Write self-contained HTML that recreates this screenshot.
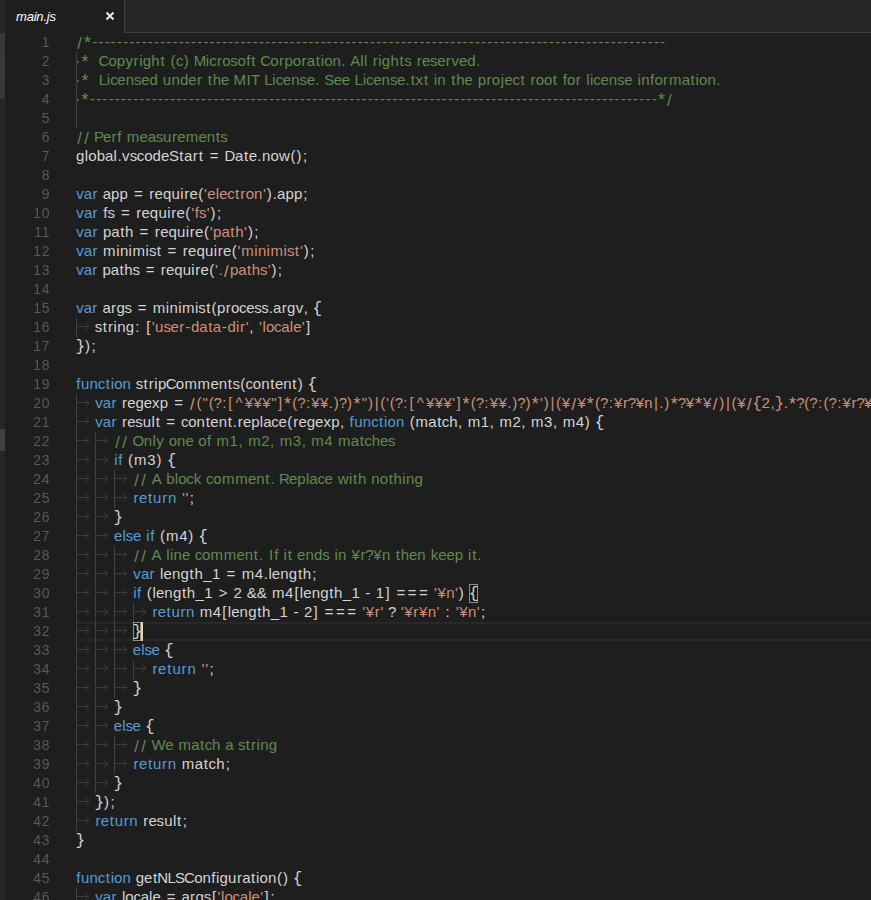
<!DOCTYPE html>
<html><head><meta charset="utf-8"><style>
html,body{margin:0;padding:0;}
body{width:871px;height:900px;overflow:hidden;background:#1e1e1e;position:relative;font-family:"Liberation Sans",sans-serif;}
.tabrest{position:absolute;left:124px;top:0;right:0;height:32px;background:#252525;border-left:1px solid #3f3f3f;border-bottom:1px solid #3f3f3f;}
.tabname{position:absolute;left:16px;top:9px;font-size:13px;font-style:italic;color:#ffffff;letter-spacing:-0.2px;}
.close{position:absolute;left:105px;top:11px;width:10px;height:10px;}
.strip{position:absolute;left:0;top:0;width:5px;height:900px;background:#262626;}
.ln{position:absolute;left:0;width:50.2px;text-align:right;font-size:14px;color:#595959;line-height:19px;height:19px;letter-spacing:0.7px;}
.l{position:absolute;height:19px;line-height:19px;font-size:15px;white-space:pre;color:#d4d4d4;font-kerning:none;}
.l i{font-style:normal;display:inline-flex;justify-content:center;}
.l i.b{font-family:"Liberation Mono",monospace;font-size:16px;}
.l i.st{font-size:18px;position:relative;top:1.5px;}
.l i.sl{font-size:16.5px;position:relative;top:1.5px;}
.k{color:#569cd6}.s{color:#ce9178}.c{color:#608b4e}
.bm{position:absolute;width:7px;height:17px;border:1px solid #9a8a84;background:#0f1a16;}
.caret{position:absolute;left:141px;top:622px;width:2px;height:19px;background:#dcd9b0;}
.g{position:absolute;width:1px;background:#404040;}
.cur{position:absolute;left:76px;right:0;top:622px;height:15px;border-top:2px solid #282828;border-bottom:2px solid #282828;}
.dot{position:absolute;left:77px;width:2px;height:2px;background:#505050;}
.w0{width:4.797px}.w1{width:6.243px}.w2{width:8.681px}.w3{width:9.947px}.w4{width:3.545px}.w5{width:6.036px}.w6{width:6.170px}.w7{width:8.615px}.w8{width:4.964px}.w9{width:6.176px}.w10{width:4.744px}.w11{width:7.102px}.w12{width:8.681px}.w13{width:8.681px}.w14{width:8.681px}.w15{width:8.681px}.w16{width:6.143px}.w17{width:5.923px}.w18{width:11.173px}.w19{width:11.173px}.w20{width:7.122px}.w21{width:9.334px}.w22{width:9.528px}.w23{width:10.574px}.w24{width:5.743px}.w25{width:7.602px}.w26{width:11.486px}.w27{width:10.207px}.w28{width:10.760px}.w29{width:8.235px}.w30{width:9.481px}.w31{width:9.361px}.w32{width:8.395px}.w33{width:13.478px}.w34{width:6.210px}.w35{width:6.210px}.w36{width:11.173px}.w37{width:8.681px}.w38{width:8.188px}.w39{width:8.468px}.w40{width:7.109px}.w41{width:8.468px}.w42{width:8.122px}.w43{width:4.797px}.w44{width:8.468px}.w45{width:8.648px}.w46{width:3.738px}.w47{width:4.537px}.w48{width:7.895px}.w49{width:3.738px}.w50{width:13.245px}.w51{width:8.648px}.w52{width:8.202px}.w53{width:8.468px}.w54{width:8.468px}.w55{width:5.823px}.w56{width:7.109px}.w57{width:5.370px}.w58{width:8.648px}.w59{width:7.895px}.w60{width:11.080px}.w61{width:7.895px}.w62{width:7.895px}.w63{width:8.661px}.w64{width:6.210px}.w65{width:8.521px}.w66{width:8.795px}
</style></head><body>
<div class="strip"></div>
<div class="tabrest"></div>
<div class="tabname">main.js</div>
<svg class="close" viewBox="0 0 10 10"><path d="M1.5 1.5L8.5 8.5M8.5 1.5L1.5 8.5" stroke="#e8e8e8" stroke-width="2"/></svg>
<div class="strip" style="top:33px;height:22px;background:#343837"></div>
<div class="strip" style="top:55px;height:22px;background:#3b3b3b"></div>
<div class="strip" style="top:77px;height:22px;background:#343837"></div>
<div class="strip" style="top:429px;height:22px;background:#3f3f3f"></div>
<div class="cur"></div>
<div class="bm" style="left:469px;top:584px"></div>
<div class="bm" style="left:133px;top:622px;width:6px"></div>
<div class="caret"></div>

<div class="g" style="left:76px;top:52px;height:76px"></div>
<div class="g" style="left:76px;top:318px;height:19px"></div>
<div class="g" style="left:76px;top:394px;height:437px"></div>
<div class="g" style="left:95px;top:432px;height:361px"></div>
<div class="g" style="left:114px;top:470px;height:38px"></div>
<div class="g" style="left:114px;top:546px;height:152px"></div>
<div class="g" style="left:133px;top:603px;height:19px"></div>
<div class="g" style="left:133px;top:660px;height:19px"></div>
<div class="g" style="left:114px;top:736px;height:38px"></div>
<div class="g" style="left:76px;top:888px;height:19px"></div>
<svg style="position:absolute;left:0;top:0" width="871" height="900"><path stroke="#3c3c3c" stroke-width="1" fill="none" d="M76 326.5H89 M85 323.0L89 326.5L85 330.0 M76 402.5H89 M85 399.0L89 402.5L85 406.0 M76 421.5H89 M85 418.0L89 421.5L85 425.0 M76 440.5H89 M85 437.0L89 440.5L85 444.0 M95 440.5H108 M104 437.0L108 440.5L104 444.0 M76 459.5H89 M85 456.0L89 459.5L85 463.0 M95 459.5H108 M104 456.0L108 459.5L104 463.0 M76 478.5H89 M85 475.0L89 478.5L85 482.0 M95 478.5H108 M104 475.0L108 478.5L104 482.0 M114 478.5H127 M123 475.0L127 478.5L123 482.0 M76 497.5H89 M85 494.0L89 497.5L85 501.0 M95 497.5H108 M104 494.0L108 497.5L104 501.0 M114 497.5H127 M123 494.0L127 497.5L123 501.0 M76 516.5H89 M85 513.0L89 516.5L85 520.0 M95 516.5H108 M104 513.0L108 516.5L104 520.0 M76 535.5H89 M85 532.0L89 535.5L85 539.0 M95 535.5H108 M104 532.0L108 535.5L104 539.0 M76 554.5H89 M85 551.0L89 554.5L85 558.0 M95 554.5H108 M104 551.0L108 554.5L104 558.0 M114 554.5H127 M123 551.0L127 554.5L123 558.0 M76 573.5H89 M85 570.0L89 573.5L85 577.0 M95 573.5H108 M104 570.0L108 573.5L104 577.0 M114 573.5H127 M123 570.0L127 573.5L123 577.0 M76 592.5H89 M85 589.0L89 592.5L85 596.0 M95 592.5H108 M104 589.0L108 592.5L104 596.0 M114 592.5H127 M123 589.0L127 592.5L123 596.0 M76 611.5H89 M85 608.0L89 611.5L85 615.0 M95 611.5H108 M104 608.0L108 611.5L104 615.0 M114 611.5H127 M123 608.0L127 611.5L123 615.0 M133 611.5H146 M142 608.0L146 611.5L142 615.0 M76 630.5H89 M85 627.0L89 630.5L85 634.0 M95 630.5H108 M104 627.0L108 630.5L104 634.0 M114 630.5H127 M123 627.0L127 630.5L123 634.0 M76 649.5H89 M85 646.0L89 649.5L85 653.0 M95 649.5H108 M104 646.0L108 649.5L104 653.0 M114 649.5H127 M123 646.0L127 649.5L123 653.0 M76 668.5H89 M85 665.0L89 668.5L85 672.0 M95 668.5H108 M104 665.0L108 668.5L104 672.0 M114 668.5H127 M123 665.0L127 668.5L123 672.0 M133 668.5H146 M142 665.0L146 668.5L142 672.0 M76 687.5H89 M85 684.0L89 687.5L85 691.0 M95 687.5H108 M104 684.0L108 687.5L104 691.0 M114 687.5H127 M123 684.0L127 687.5L123 691.0 M76 706.5H89 M85 703.0L89 706.5L85 710.0 M95 706.5H108 M104 703.0L108 706.5L104 710.0 M76 725.5H89 M85 722.0L89 725.5L85 729.0 M95 725.5H108 M104 722.0L108 725.5L104 729.0 M76 744.5H89 M85 741.0L89 744.5L85 748.0 M95 744.5H108 M104 741.0L108 744.5L104 748.0 M114 744.5H127 M123 741.0L127 744.5L123 748.0 M76 763.5H89 M85 760.0L89 763.5L85 767.0 M95 763.5H108 M104 760.0L108 763.5L104 767.0 M114 763.5H127 M123 760.0L127 763.5L123 767.0 M76 782.5H89 M85 779.0L89 782.5L85 786.0 M95 782.5H108 M104 779.0L108 782.5L104 786.0 M76 801.5H89 M85 798.0L89 801.5L85 805.0 M76 820.5H89 M85 817.0L89 820.5L85 824.0 M76 896.5H89 M85 893.0L89 896.5L85 900.0"/></svg>
<div class="l" id="L1" style="top:32px;left:76px"><span class="c"><i class="w11 sl" style="width:7.103px">/</i><i class="w7 st" style="width:8.616px">*</i><i class="w9" style="width:6.177px">-</i><i class="w9" style="width:6.177px">-</i><i class="w9" style="width:6.177px">-</i><i class="w9" style="width:6.177px">-</i><i class="w9" style="width:6.177px">-</i><i class="w9" style="width:6.177px">-</i><i class="w9" style="width:6.177px">-</i><i class="w9" style="width:6.177px">-</i><i class="w9" style="width:6.177px">-</i><i class="w9" style="width:6.177px">-</i><i class="w9" style="width:6.177px">-</i><i class="w9" style="width:6.177px">-</i><i class="w9" style="width:6.177px">-</i><i class="w9" style="width:6.177px">-</i><i class="w9" style="width:6.177px">-</i><i class="w9" style="width:6.177px">-</i><i class="w9" style="width:6.177px">-</i><i class="w9" style="width:6.177px">-</i><i class="w9" style="width:6.177px">-</i><i class="w9" style="width:6.177px">-</i><i class="w9" style="width:6.177px">-</i><i class="w9" style="width:6.177px">-</i><i class="w9" style="width:6.177px">-</i><i class="w9" style="width:6.177px">-</i><i class="w9" style="width:6.177px">-</i><i class="w9" style="width:6.177px">-</i><i class="w9" style="width:6.177px">-</i><i class="w9" style="width:6.177px">-</i><i class="w9" style="width:6.177px">-</i><i class="w9" style="width:6.177px">-</i><i class="w9" style="width:6.177px">-</i><i class="w9" style="width:6.177px">-</i><i class="w9" style="width:6.177px">-</i><i class="w9" style="width:6.177px">-</i><i class="w9" style="width:6.177px">-</i><i class="w9" style="width:6.177px">-</i><i class="w9" style="width:6.177px">-</i><i class="w9" style="width:6.177px">-</i><i class="w9" style="width:6.177px">-</i><i class="w9" style="width:6.177px">-</i><i class="w9" style="width:6.177px">-</i><i class="w9" style="width:6.177px">-</i><i class="w9" style="width:6.177px">-</i><i class="w9" style="width:6.177px">-</i><i class="w9" style="width:6.177px">-</i><i class="w9" style="width:6.177px">-</i><i class="w9" style="width:6.177px">-</i><i class="w9" style="width:6.177px">-</i><i class="w9" style="width:6.177px">-</i><i class="w9" style="width:6.177px">-</i><i class="w9" style="width:6.177px">-</i><i class="w9" style="width:6.177px">-</i><i class="w9" style="width:6.177px">-</i><i class="w9" style="width:6.177px">-</i><i class="w9" style="width:6.177px">-</i><i class="w9" style="width:6.177px">-</i><i class="w9" style="width:6.177px">-</i><i class="w9" style="width:6.177px">-</i><i class="w9" style="width:6.177px">-</i><i class="w9" style="width:6.177px">-</i><i class="w9" style="width:6.177px">-</i><i class="w9" style="width:6.177px">-</i><i class="w9" style="width:6.177px">-</i><i class="w9" style="width:6.177px">-</i><i class="w9" style="width:6.177px">-</i><i class="w9" style="width:6.177px">-</i><i class="w9" style="width:6.177px">-</i><i class="w9" style="width:6.177px">-</i><i class="w9" style="width:6.177px">-</i><i class="w9" style="width:6.177px">-</i><i class="w9" style="width:6.177px">-</i><i class="w9" style="width:6.177px">-</i><i class="w9" style="width:6.177px">-</i><i class="w9" style="width:6.177px">-</i><i class="w9" style="width:6.177px">-</i><i class="w9" style="width:6.177px">-</i><i class="w9" style="width:6.177px">-</i><i class="w9" style="width:6.177px">-</i><i class="w9" style="width:6.177px">-</i><i class="w9" style="width:6.177px">-</i><i class="w9" style="width:6.177px">-</i><i class="w9" style="width:6.177px">-</i><i class="w9" style="width:6.177px">-</i><i class="w9" style="width:6.177px">-</i><i class="w9" style="width:6.177px">-</i><i class="w9" style="width:6.177px">-</i><i class="w9" style="width:6.177px">-</i><i class="w9" style="width:6.177px">-</i><i class="w9" style="width:6.177px">-</i><i class="w9" style="width:6.177px">-</i><i class="w9" style="width:6.177px">-</i><i class="w9" style="width:6.177px">-</i><i class="w9" style="width:6.177px">-</i></span></div>
<div class="l" id="L2" style="top:51px;left:76px"><i class="w0" style="width:4.807px"> </i><span class="c"><i class="w7 st" style="width:8.632px">*</i><i class="w0" style="width:4.807px"> </i><i class="w0" style="width:4.807px"> </i><i class="w22" style="width:9.547px">C</i><i class="w52" style="width:8.218px">o</i><i class="w53" style="width:8.485px">p</i><i class="w62" style="width:7.911px">y</i><i class="w55" style="width:5.835px">r</i><i class="w46" style="width:3.745px">i</i><i class="w44" style="width:8.485px">g</i><i class="w45" style="width:8.665px">h</i><i class="w57" style="width:5.381px">t</i><i class="w0" style="width:4.807px"> </i><i class="w5" style="width:6.048px">(</i><i class="w40" style="width:7.123px">c</i><i class="w6" style="width:6.182px">)</i><i class="w0" style="width:4.807px"> </i><i class="w26" style="width:11.509px">M</i><i class="w46" style="width:3.745px">i</i><i class="w40" style="width:7.123px">c</i><i class="w55" style="width:5.835px">r</i><i class="w52" style="width:8.218px">o</i><i class="w56" style="width:7.123px">s</i><i class="w52" style="width:8.218px">o</i><i class="w43" style="width:4.807px">f</i><i class="w57" style="width:5.381px">t</i><i class="w0" style="width:4.807px"> </i><i class="w22" style="width:9.547px">C</i><i class="w52" style="width:8.218px">o</i><i class="w55" style="width:5.835px">r</i><i class="w53" style="width:8.485px">p</i><i class="w52" style="width:8.218px">o</i><i class="w55" style="width:5.835px">r</i><i class="w38" style="width:8.205px">a</i><i class="w57" style="width:5.381px">t</i><i class="w46" style="width:3.745px">i</i><i class="w52" style="width:8.218px">o</i><i class="w51" style="width:8.665px">n</i><i class="w10" style="width:4.753px">.</i><i class="w0" style="width:4.807px"> </i><i class="w21" style="width:9.353px">A</i><i class="w49" style="width:3.745px">l</i><i class="w49" style="width:3.745px">l</i><i class="w0" style="width:4.807px"> </i><i class="w55" style="width:5.835px">r</i><i class="w46" style="width:3.745px">i</i><i class="w44" style="width:8.485px">g</i><i class="w45" style="width:8.665px">h</i><i class="w57" style="width:5.381px">t</i><i class="w56" style="width:7.123px">s</i><i class="w0" style="width:4.807px"> </i><i class="w55" style="width:5.835px">r</i><i class="w42" style="width:8.138px">e</i><i class="w56" style="width:7.123px">s</i><i class="w42" style="width:8.138px">e</i><i class="w55" style="width:5.835px">r</i><i class="w59" style="width:7.911px">v</i><i class="w42" style="width:8.138px">e</i><i class="w41" style="width:8.485px">d</i><i class="w10" style="width:4.753px">.</i></span></div>
<div class="dot" style="top:61px"></div>
<div class="l" id="L3" style="top:70px;left:76px"><i class="w0" style="width:4.799px"> </i><span class="c"><i class="w7 st" style="width:8.619px">*</i><i class="w0" style="width:4.799px"> </i><i class="w0" style="width:4.799px"> </i><i class="w25" style="width:7.606px">L</i><i class="w46" style="width:3.740px">i</i><i class="w40" style="width:7.113px">c</i><i class="w42" style="width:8.126px">e</i><i class="w51" style="width:8.652px">n</i><i class="w56" style="width:7.113px">s</i><i class="w42" style="width:8.126px">e</i><i class="w41" style="width:8.472px">d</i><i class="w0" style="width:4.799px"> </i><i class="w58" style="width:8.652px">u</i><i class="w51" style="width:8.652px">n</i><i class="w41" style="width:8.472px">d</i><i class="w42" style="width:8.126px">e</i><i class="w55" style="width:5.826px">r</i><i class="w0" style="width:4.799px"> </i><i class="w57" style="width:5.373px">t</i><i class="w45" style="width:8.652px">h</i><i class="w42" style="width:8.126px">e</i><i class="w0" style="width:4.799px"> </i><i class="w26" style="width:11.492px">M</i><i class="w24" style="width:5.746px">I</i><i class="w32" style="width:8.399px">T</i><i class="w0" style="width:4.799px"> </i><i class="w25" style="width:7.606px">L</i><i class="w46" style="width:3.740px">i</i><i class="w40" style="width:7.113px">c</i><i class="w42" style="width:8.126px">e</i><i class="w51" style="width:8.652px">n</i><i class="w56" style="width:7.113px">s</i><i class="w42" style="width:8.126px">e</i><i class="w10" style="width:4.746px">.</i><i class="w0" style="width:4.799px"> </i><i class="w31" style="width:9.366px">S</i><i class="w42" style="width:8.126px">e</i><i class="w42" style="width:8.126px">e</i><i class="w0" style="width:4.799px"> </i><i class="w25" style="width:7.606px">L</i><i class="w46" style="width:3.740px">i</i><i class="w40" style="width:7.113px">c</i><i class="w42" style="width:8.126px">e</i><i class="w51" style="width:8.652px">n</i><i class="w56" style="width:7.113px">s</i><i class="w42" style="width:8.126px">e</i><i class="w10" style="width:4.746px">.</i><i class="w57" style="width:5.373px">t</i><i class="w61" style="width:7.899px">x</i><i class="w57" style="width:5.373px">t</i><i class="w0" style="width:4.799px"> </i><i class="w46" style="width:3.740px">i</i><i class="w51" style="width:8.652px">n</i><i class="w0" style="width:4.799px"> </i><i class="w57" style="width:5.373px">t</i><i class="w45" style="width:8.652px">h</i><i class="w42" style="width:8.126px">e</i><i class="w0" style="width:4.799px"> </i><i class="w53" style="width:8.472px">p</i><i class="w55" style="width:5.826px">r</i><i class="w52" style="width:8.206px">o</i><i class="w47" style="width:4.539px">j</i><i class="w42" style="width:8.126px">e</i><i class="w40" style="width:7.113px">c</i><i class="w57" style="width:5.373px">t</i><i class="w0" style="width:4.799px"> </i><i class="w55" style="width:5.826px">r</i><i class="w52" style="width:8.206px">o</i><i class="w52" style="width:8.206px">o</i><i class="w57" style="width:5.373px">t</i><i class="w0" style="width:4.799px"> </i><i class="w43" style="width:4.799px">f</i><i class="w52" style="width:8.206px">o</i><i class="w55" style="width:5.826px">r</i><i class="w0" style="width:4.799px"> </i><i class="w49" style="width:3.740px">l</i><i class="w46" style="width:3.740px">i</i><i class="w40" style="width:7.113px">c</i><i class="w42" style="width:8.126px">e</i><i class="w51" style="width:8.652px">n</i><i class="w56" style="width:7.113px">s</i><i class="w42" style="width:8.126px">e</i><i class="w0" style="width:4.799px"> </i><i class="w46" style="width:3.740px">i</i><i class="w51" style="width:8.652px">n</i><i class="w43" style="width:4.799px">f</i><i class="w52" style="width:8.206px">o</i><i class="w55" style="width:5.826px">r</i><i class="w50" style="width:13.252px">m</i><i class="w38" style="width:8.192px">a</i><i class="w57" style="width:5.373px">t</i><i class="w46" style="width:3.740px">i</i><i class="w52" style="width:8.206px">o</i><i class="w51" style="width:8.652px">n</i><i class="w10" style="width:4.746px">.</i></span></div>
<div class="dot" style="top:80px"></div>
<div class="l" id="L4" style="top:89px;left:76px"><i class="w0" style="width:4.801px"> </i><span class="c"><i class="w7 st" style="width:8.622px">*</i><i class="w9" style="width:6.181px">-</i><i class="w9" style="width:6.181px">-</i><i class="w9" style="width:6.181px">-</i><i class="w9" style="width:6.181px">-</i><i class="w9" style="width:6.181px">-</i><i class="w9" style="width:6.181px">-</i><i class="w9" style="width:6.181px">-</i><i class="w9" style="width:6.181px">-</i><i class="w9" style="width:6.181px">-</i><i class="w9" style="width:6.181px">-</i><i class="w9" style="width:6.181px">-</i><i class="w9" style="width:6.181px">-</i><i class="w9" style="width:6.181px">-</i><i class="w9" style="width:6.181px">-</i><i class="w9" style="width:6.181px">-</i><i class="w9" style="width:6.181px">-</i><i class="w9" style="width:6.181px">-</i><i class="w9" style="width:6.181px">-</i><i class="w9" style="width:6.181px">-</i><i class="w9" style="width:6.181px">-</i><i class="w9" style="width:6.181px">-</i><i class="w9" style="width:6.181px">-</i><i class="w9" style="width:6.181px">-</i><i class="w9" style="width:6.181px">-</i><i class="w9" style="width:6.181px">-</i><i class="w9" style="width:6.181px">-</i><i class="w9" style="width:6.181px">-</i><i class="w9" style="width:6.181px">-</i><i class="w9" style="width:6.181px">-</i><i class="w9" style="width:6.181px">-</i><i class="w9" style="width:6.181px">-</i><i class="w9" style="width:6.181px">-</i><i class="w9" style="width:6.181px">-</i><i class="w9" style="width:6.181px">-</i><i class="w9" style="width:6.181px">-</i><i class="w9" style="width:6.181px">-</i><i class="w9" style="width:6.181px">-</i><i class="w9" style="width:6.181px">-</i><i class="w9" style="width:6.181px">-</i><i class="w9" style="width:6.181px">-</i><i class="w9" style="width:6.181px">-</i><i class="w9" style="width:6.181px">-</i><i class="w9" style="width:6.181px">-</i><i class="w9" style="width:6.181px">-</i><i class="w9" style="width:6.181px">-</i><i class="w9" style="width:6.181px">-</i><i class="w9" style="width:6.181px">-</i><i class="w9" style="width:6.181px">-</i><i class="w9" style="width:6.181px">-</i><i class="w9" style="width:6.181px">-</i><i class="w9" style="width:6.181px">-</i><i class="w9" style="width:6.181px">-</i><i class="w9" style="width:6.181px">-</i><i class="w9" style="width:6.181px">-</i><i class="w9" style="width:6.181px">-</i><i class="w9" style="width:6.181px">-</i><i class="w9" style="width:6.181px">-</i><i class="w9" style="width:6.181px">-</i><i class="w9" style="width:6.181px">-</i><i class="w9" style="width:6.181px">-</i><i class="w9" style="width:6.181px">-</i><i class="w9" style="width:6.181px">-</i><i class="w9" style="width:6.181px">-</i><i class="w9" style="width:6.181px">-</i><i class="w9" style="width:6.181px">-</i><i class="w9" style="width:6.181px">-</i><i class="w9" style="width:6.181px">-</i><i class="w9" style="width:6.181px">-</i><i class="w9" style="width:6.181px">-</i><i class="w9" style="width:6.181px">-</i><i class="w9" style="width:6.181px">-</i><i class="w9" style="width:6.181px">-</i><i class="w9" style="width:6.181px">-</i><i class="w9" style="width:6.181px">-</i><i class="w9" style="width:6.181px">-</i><i class="w9" style="width:6.181px">-</i><i class="w9" style="width:6.181px">-</i><i class="w9" style="width:6.181px">-</i><i class="w9" style="width:6.181px">-</i><i class="w9" style="width:6.181px">-</i><i class="w9" style="width:6.181px">-</i><i class="w9" style="width:6.181px">-</i><i class="w9" style="width:6.181px">-</i><i class="w9" style="width:6.181px">-</i><i class="w9" style="width:6.181px">-</i><i class="w9" style="width:6.181px">-</i><i class="w9" style="width:6.181px">-</i><i class="w9" style="width:6.181px">-</i><i class="w9" style="width:6.181px">-</i><i class="w9" style="width:6.181px">-</i><i class="w9" style="width:6.181px">-</i><i class="w9" style="width:6.181px">-</i><i class="w7 st" style="width:8.622px">*</i><i class="w11 sl" style="width:7.108px">/</i></span></div>
<div class="dot" style="top:99px"></div>
<div class="l" id="L6" style="top:127px;left:76px"><span class="c"><i class="w11 sl" style="width:7.065px">/</i><i class="w11 sl" style="width:7.065px">/</i><i class="w0" style="width:4.772px"> </i><i class="w29" style="width:8.191px">P</i><i class="w42" style="width:8.079px">e</i><i class="w55" style="width:5.792px">r</i><i class="w43" style="width:4.772px">f</i><i class="w0" style="width:4.772px"> </i><i class="w50" style="width:13.175px">m</i><i class="w42" style="width:8.079px">e</i><i class="w38" style="width:8.145px">a</i><i class="w56" style="width:7.071px">s</i><i class="w58" style="width:8.602px">u</i><i class="w55" style="width:5.792px">r</i><i class="w42" style="width:8.079px">e</i><i class="w50" style="width:13.175px">m</i><i class="w42" style="width:8.079px">e</i><i class="w51" style="width:8.602px">n</i><i class="w57" style="width:5.342px">t</i><i class="w56" style="width:7.071px">s</i></span></div>
<div class="l" id="L7" style="top:146px;left:76px"><i class="w44" style="width:8.546px">g</i><i class="w49" style="width:3.772px">l</i><i class="w52" style="width:8.277px">o</i><i class="w39" style="width:8.546px">b</i><i class="w38" style="width:8.263px">a</i><i class="w49" style="width:3.772px">l</i><i class="w10" style="width:4.787px">.</i><i class="w59" style="width:7.967px">v</i><i class="w56" style="width:7.174px">s</i><i class="w40" style="width:7.174px">c</i><i class="w52" style="width:8.277px">o</i><i class="w41" style="width:8.546px">d</i><i class="w42" style="width:8.196px">e</i><i class="w31" style="width:9.447px">S</i><i class="w57" style="width:5.419px">t</i><i class="w38" style="width:8.263px">a</i><i class="w55" style="width:5.876px">r</i><i class="w57" style="width:5.419px">t</i><i class="w0" style="width:4.841px"> </i><i class="w18" style="width:11.275px">=</i><i class="w0" style="width:4.841px"> </i><i class="w23" style="width:10.670px">D</i><i class="w38" style="width:8.263px">a</i><i class="w57" style="width:5.419px">t</i><i class="w42" style="width:8.196px">e</i><i class="w10" style="width:4.787px">.</i><i class="w51" style="width:8.727px">n</i><i class="w52" style="width:8.277px">o</i><i class="w60" style="width:11.181px">w</i><i class="w5" style="width:6.092px">(</i><i class="w6" style="width:6.226px">)</i><i class="w17" style="width:5.977px">;</i></div>
<div class="l" id="L9" style="top:184px;left:76px"><span class="k"><i class="w59" style="width:7.926px">v</i><i class="w38" style="width:8.220px">a</i><i class="w55" style="width:5.846px">r</i></span><i class="w0" style="width:4.816px"> </i><i class="w38" style="width:8.220px">a</i><i class="w53" style="width:8.501px">p</i><i class="w53" style="width:8.501px">p</i><i class="w0" style="width:4.816px"> </i><i class="w18" style="width:11.216px">=</i><i class="w0" style="width:4.816px"> </i><i class="w55" style="width:5.846px">r</i><i class="w42" style="width:8.153px">e</i><i class="w54" style="width:8.501px">q</i><i class="w58" style="width:8.681px">u</i><i class="w46" style="width:3.752px">i</i><i class="w55" style="width:5.846px">r</i><i class="w42" style="width:8.153px">e</i><i class="w5" style="width:6.060px">(</i><span class="s"><i class="w4" style="width:3.558px">&#x27;</i><i class="w42" style="width:8.153px">e</i><i class="w49" style="width:3.752px">l</i><i class="w42" style="width:8.153px">e</i><i class="w40" style="width:7.136px">c</i><i class="w57" style="width:5.391px">t</i><i class="w55" style="width:5.846px">r</i><i class="w52" style="width:8.233px">o</i><i class="w51" style="width:8.681px">n</i><i class="w4" style="width:3.558px">&#x27;</i></span><i class="w6" style="width:6.193px">)</i><i class="w10" style="width:4.762px">.</i><i class="w38" style="width:8.220px">a</i><i class="w53" style="width:8.501px">p</i><i class="w53" style="width:8.501px">p</i><i class="w17" style="width:5.946px">;</i></div>
<div class="l" id="L10" style="top:203px;left:76px"><span class="k"><i class="w59" style="width:7.953px">v</i><i class="w38" style="width:8.248px">a</i><i class="w55" style="width:5.866px">r</i></span><i class="w0" style="width:4.832px"> </i><i class="w43" style="width:4.832px">f</i><i class="w56" style="width:7.161px">s</i><i class="w0" style="width:4.832px"> </i><i class="w18" style="width:11.255px">=</i><i class="w0" style="width:4.832px"> </i><i class="w55" style="width:5.866px">r</i><i class="w42" style="width:8.181px">e</i><i class="w54" style="width:8.530px">q</i><i class="w58" style="width:8.711px">u</i><i class="w46" style="width:3.765px">i</i><i class="w55" style="width:5.866px">r</i><i class="w42" style="width:8.181px">e</i><i class="w5" style="width:6.080px">(</i><span class="s"><i class="w4" style="width:3.570px">&#x27;</i><i class="w43" style="width:4.832px">f</i><i class="w56" style="width:7.161px">s</i><i class="w4" style="width:3.570px">&#x27;</i></span><i class="w6" style="width:6.215px">)</i><i class="w17" style="width:5.966px">;</i></div>
<div class="l" id="L11" style="top:222px;left:76px"><span class="k"><i class="w59" style="width:7.930px">v</i><i class="w38" style="width:8.225px">a</i><i class="w55" style="width:5.849px">r</i></span><i class="w0" style="width:4.818px"> </i><i class="w53" style="width:8.506px">p</i><i class="w38" style="width:8.225px">a</i><i class="w57" style="width:5.394px">t</i><i class="w45" style="width:8.686px">h</i><i class="w0" style="width:4.818px"> </i><i class="w18" style="width:11.223px">=</i><i class="w0" style="width:4.818px"> </i><i class="w55" style="width:5.849px">r</i><i class="w42" style="width:8.158px">e</i><i class="w54" style="width:8.506px">q</i><i class="w58" style="width:8.686px">u</i><i class="w46" style="width:3.754px">i</i><i class="w55" style="width:5.849px">r</i><i class="w42" style="width:8.158px">e</i><i class="w5" style="width:6.063px">(</i><span class="s"><i class="w4" style="width:3.560px">&#x27;</i><i class="w53" style="width:8.506px">p</i><i class="w38" style="width:8.225px">a</i><i class="w57" style="width:5.394px">t</i><i class="w45" style="width:8.686px">h</i><i class="w4" style="width:3.560px">&#x27;</i></span><i class="w6" style="width:6.197px">)</i><i class="w17" style="width:5.949px">;</i></div>
<div class="l" id="L12" style="top:241px;left:76px"><span class="k"><i class="w59" style="width:7.911px">v</i><i class="w38" style="width:8.205px">a</i><i class="w55" style="width:5.835px">r</i></span><i class="w0" style="width:4.807px"> </i><i class="w50" style="width:13.272px">m</i><i class="w46" style="width:3.745px">i</i><i class="w51" style="width:8.666px">n</i><i class="w46" style="width:3.745px">i</i><i class="w50" style="width:13.272px">m</i><i class="w46" style="width:3.745px">i</i><i class="w56" style="width:7.123px">s</i><i class="w57" style="width:5.381px">t</i><i class="w0" style="width:4.807px"> </i><i class="w18" style="width:11.196px">=</i><i class="w0" style="width:4.807px"> </i><i class="w55" style="width:5.835px">r</i><i class="w42" style="width:8.138px">e</i><i class="w54" style="width:8.485px">q</i><i class="w58" style="width:8.666px">u</i><i class="w46" style="width:3.745px">i</i><i class="w55" style="width:5.835px">r</i><i class="w42" style="width:8.138px">e</i><i class="w5" style="width:6.049px">(</i><span class="s"><i class="w4" style="width:3.552px">&#x27;</i><i class="w50" style="width:13.272px">m</i><i class="w46" style="width:3.745px">i</i><i class="w51" style="width:8.666px">n</i><i class="w46" style="width:3.745px">i</i><i class="w50" style="width:13.272px">m</i><i class="w46" style="width:3.745px">i</i><i class="w56" style="width:7.123px">s</i><i class="w57" style="width:5.381px">t</i><i class="w4" style="width:3.552px">&#x27;</i></span><i class="w6" style="width:6.182px">)</i><i class="w17" style="width:5.935px">;</i></div>
<div class="l" id="L13" style="top:260px;left:76px"><span class="k"><i class="w59" style="width:7.828px">v</i><i class="w38" style="width:8.118px">a</i><i class="w55" style="width:5.773px">r</i></span><i class="w0" style="width:4.756px"> </i><i class="w53" style="width:8.396px">p</i><i class="w38" style="width:8.118px">a</i><i class="w57" style="width:5.324px">t</i><i class="w45" style="width:8.574px">h</i><i class="w56" style="width:7.048px">s</i><i class="w0" style="width:4.756px"> </i><i class="w18" style="width:11.078px">=</i><i class="w0" style="width:4.756px"> </i><i class="w55" style="width:5.773px">r</i><i class="w42" style="width:8.052px">e</i><i class="w54" style="width:8.396px">q</i><i class="w58" style="width:8.574px">u</i><i class="w46" style="width:3.706px">i</i><i class="w55" style="width:5.773px">r</i><i class="w42" style="width:8.052px">e</i><i class="w5" style="width:5.985px">(</i><span class="s"><i class="w4" style="width:3.514px">&#x27;</i><i class="w10" style="width:4.703px">.</i><i class="w11 sl" style="width:7.042px">/</i><i class="w53" style="width:8.396px">p</i><i class="w38" style="width:8.118px">a</i><i class="w57" style="width:5.324px">t</i><i class="w45" style="width:8.574px">h</i><i class="w56" style="width:7.048px">s</i><i class="w4" style="width:3.514px">&#x27;</i></span><i class="w6" style="width:6.117px">)</i><i class="w17" style="width:5.872px">;</i></div>
<div class="l" id="L15" style="top:298px;left:76px"><span class="k"><i class="w59" style="width:7.844px">v</i><i class="w38" style="width:8.135px">a</i><i class="w55" style="width:5.785px">r</i></span><i class="w0" style="width:4.766px"> </i><i class="w38" style="width:8.135px">a</i><i class="w55" style="width:5.785px">r</i><i class="w44" style="width:8.413px">g</i><i class="w56" style="width:7.063px">s</i><i class="w0" style="width:4.766px"> </i><i class="w18" style="width:11.101px">=</i><i class="w0" style="width:4.766px"> </i><i class="w50" style="width:13.159px">m</i><i class="w46" style="width:3.713px">i</i><i class="w51" style="width:8.592px">n</i><i class="w46" style="width:3.713px">i</i><i class="w50" style="width:13.159px">m</i><i class="w46" style="width:3.713px">i</i><i class="w56" style="width:7.063px">s</i><i class="w57" style="width:5.335px">t</i><i class="w5" style="width:5.997px">(</i><i class="w53" style="width:8.413px">p</i><i class="w55" style="width:5.785px">r</i><i class="w52" style="width:8.148px">o</i><i class="w40" style="width:7.063px">c</i><i class="w42" style="width:8.069px">e</i><i class="w56" style="width:7.063px">s</i><i class="w56" style="width:7.063px">s</i><i class="w10" style="width:4.713px">.</i><i class="w38" style="width:8.135px">a</i><i class="w55" style="width:5.785px">r</i><i class="w44" style="width:8.413px">g</i><i class="w59" style="width:7.844px">v</i><i class="w8" style="width:4.931px">,</i><i class="w0" style="width:4.766px"> </i><i class="w63 b" style="width:8.605px">{</i></div>
<div class="l" id="L16" style="top:317px;left:95px"><i class="w56" style="width:7.128px">s</i><i class="w57" style="width:5.384px">t</i><i class="w55" style="width:5.838px">r</i><i class="w46" style="width:3.748px">i</i><i class="w51" style="width:8.671px">n</i><i class="w44" style="width:8.491px">g</i><i class="w16" style="width:6.159px">:</i><i class="w0" style="width:4.810px"> </i><i class="w34" style="width:6.226px">[</i><span class="s"><i class="w4" style="width:3.554px">&#x27;</i><i class="w58" style="width:8.671px">u</i><i class="w56" style="width:7.128px">s</i><i class="w42" style="width:8.143px">e</i><i class="w55" style="width:5.838px">r</i><i class="w9" style="width:6.193px">-</i><i class="w41" style="width:8.491px">d</i><i class="w38" style="width:8.210px">a</i><i class="w57" style="width:5.384px">t</i><i class="w38" style="width:8.210px">a</i><i class="w9" style="width:6.193px">-</i><i class="w41" style="width:8.491px">d</i><i class="w46" style="width:3.748px">i</i><i class="w55" style="width:5.838px">r</i><i class="w4" style="width:3.554px">&#x27;</i></span><i class="w8" style="width:4.977px">,</i><i class="w0" style="width:4.810px"> </i><span class="s"><i class="w4" style="width:3.554px">&#x27;</i><i class="w49" style="width:3.748px">l</i><i class="w52" style="width:8.223px">o</i><i class="w40" style="width:7.128px">c</i><i class="w38" style="width:8.210px">a</i><i class="w49" style="width:3.748px">l</i><i class="w42" style="width:8.143px">e</i><i class="w4" style="width:3.554px">&#x27;</i></span><i class="w35" style="width:6.226px">]</i></div>
<div class="l" id="L17" style="top:336px;left:76px"><i class="w65 b">}</i><i class="w6">)</i><i class="w17">;</i></div>
<div class="l" id="L19" style="top:374px;left:76px"><span class="k"><i class="w43" style="width:4.794px">f</i><i class="w58" style="width:8.642px">u</i><i class="w51" style="width:8.642px">n</i><i class="w40" style="width:7.104px">c</i><i class="w57" style="width:5.367px">t</i><i class="w46" style="width:3.735px">i</i><i class="w52" style="width:8.196px">o</i><i class="w51" style="width:8.642px">n</i></span><i class="w0" style="width:4.794px"> </i><i class="w56" style="width:7.104px">s</i><i class="w57" style="width:5.367px">t</i><i class="w55" style="width:5.819px">r</i><i class="w46" style="width:3.735px">i</i><i class="w53" style="width:8.463px">p</i><i class="w22" style="width:9.521px">C</i><i class="w52" style="width:8.196px">o</i><i class="w50" style="width:13.237px">m</i><i class="w50" style="width:13.237px">m</i><i class="w42" style="width:8.116px">e</i><i class="w51" style="width:8.642px">n</i><i class="w57" style="width:5.367px">t</i><i class="w56" style="width:7.104px">s</i><i class="w5" style="width:6.032px">(</i><i class="w40" style="width:7.104px">c</i><i class="w52" style="width:8.196px">o</i><i class="w51" style="width:8.642px">n</i><i class="w57" style="width:5.367px">t</i><i class="w42" style="width:8.116px">e</i><i class="w51" style="width:8.642px">n</i><i class="w57" style="width:5.367px">t</i><i class="w6" style="width:6.166px">)</i><i class="w0" style="width:4.794px"> </i><i class="w63 b" style="width:8.656px">{</i></div>
<div class="l" id="L20" style="top:393px;left:95px"><span class="k"><i class="w59" style="width:7.864px">v</i><i class="w38" style="width:8.156px">a</i><i class="w55" style="width:5.800px">r</i></span><i class="w0" style="width:4.778px"> </i><i class="w55" style="width:5.800px">r</i><i class="w42" style="width:8.089px">e</i><i class="w44" style="width:8.434px">g</i><i class="w42" style="width:8.089px">e</i><i class="w61" style="width:7.864px">x</i><i class="w53" style="width:8.434px">p</i><i class="w0" style="width:4.778px"> </i><i class="w18" style="width:11.128px">=</i><i class="w0" style="width:4.778px"> </i><span class="s"><i class="w11 sl" style="width:7.074px">/</i><i class="w5" style="width:6.012px">(</i><i class="w1" style="width:6.218px">&quot;</i><i class="w5" style="width:6.012px">(</i><i class="w20" style="width:7.094px">?</i><i class="w16" style="width:6.118px">:</i><i class="w34" style="width:6.185px">[</i><i class="w36" style="width:11.128px">^</i><i class="w66" style="width:8.759px">¥</i><i class="w66" style="width:8.759px">¥</i><i class="w66" style="width:8.759px">¥</i><i class="w1" style="width:6.218px">&quot;</i><i class="w35" style="width:6.185px">]</i><i class="w7 st" style="width:8.580px">*</i><i class="w5" style="width:6.012px">(</i><i class="w20" style="width:7.094px">?</i><i class="w16" style="width:6.118px">:</i><i class="w66" style="width:8.759px">¥</i><i class="w66" style="width:8.759px">¥</i><i class="w10" style="width:4.725px">.</i><i class="w6" style="width:6.145px">)</i><i class="w20" style="width:7.094px">?</i><i class="w6" style="width:6.145px">)</i><i class="w7 st" style="width:8.580px">*</i><i class="w1" style="width:6.218px">&quot;</i><i class="w6" style="width:6.145px">)</i><i class="w64" style="width:6.185px">|</i><i class="w5" style="width:6.012px">(</i><i class="w4" style="width:3.530px">&#x27;</i><i class="w5" style="width:6.012px">(</i><i class="w20" style="width:7.094px">?</i><i class="w16" style="width:6.118px">:</i><i class="w34" style="width:6.185px">[</i><i class="w36" style="width:11.128px">^</i><i class="w66" style="width:8.759px">¥</i><i class="w66" style="width:8.759px">¥</i><i class="w66" style="width:8.759px">¥</i><i class="w4" style="width:3.530px">&#x27;</i><i class="w35" style="width:6.185px">]</i><i class="w7 st" style="width:8.580px">*</i><i class="w5" style="width:6.012px">(</i><i class="w20" style="width:7.094px">?</i><i class="w16" style="width:6.118px">:</i><i class="w66" style="width:8.759px">¥</i><i class="w66" style="width:8.759px">¥</i><i class="w10" style="width:4.725px">.</i><i class="w6" style="width:6.145px">)</i><i class="w20" style="width:7.094px">?</i><i class="w6" style="width:6.145px">)</i><i class="w7 st" style="width:8.580px">*</i><i class="w4" style="width:3.530px">&#x27;</i><i class="w6" style="width:6.145px">)</i><i class="w64" style="width:6.185px">|</i><i class="w5" style="width:6.012px">(</i><i class="w66" style="width:8.759px">¥</i><i class="w11 sl" style="width:7.074px">/</i><i class="w66" style="width:8.759px">¥</i><i class="w7 st" style="width:8.580px">*</i><i class="w5" style="width:6.012px">(</i><i class="w20" style="width:7.094px">?</i><i class="w16" style="width:6.118px">:</i><i class="w66" style="width:8.759px">¥</i><i class="w55" style="width:5.800px">r</i><i class="w20" style="width:7.094px">?</i><i class="w66" style="width:8.759px">¥</i><i class="w51" style="width:8.613px">n</i><i class="w64" style="width:6.185px">|</i><i class="w10" style="width:4.725px">.</i><i class="w6" style="width:6.145px">)</i><i class="w7 st" style="width:8.580px">*</i><i class="w20" style="width:7.094px">?</i><i class="w66" style="width:8.759px">¥</i><i class="w7 st" style="width:8.580px">*</i><i class="w66" style="width:8.759px">¥</i><i class="w11 sl" style="width:7.074px">/</i><i class="w6" style="width:6.145px">)</i><i class="w64" style="width:6.185px">|</i><i class="w5" style="width:6.012px">(</i><i class="w66" style="width:8.759px">¥</i><i class="w11 sl" style="width:7.074px">/</i><i class="w63 b" style="width:8.627px">{</i><i class="w13" style="width:8.647px">2</i><i class="w8" style="width:4.944px">,</i><i class="w65 b" style="width:8.487px">}</i><i class="w10" style="width:4.725px">.</i><i class="w7 st" style="width:8.580px">*</i><i class="w20" style="width:7.094px">?</i><i class="w5" style="width:6.012px">(</i><i class="w20" style="width:7.094px">?</i><i class="w16" style="width:6.118px">:</i><i class="w5" style="width:6.012px">(</i><i class="w20" style="width:7.094px">?</i><i class="w16" style="width:6.118px">:</i><i class="w66" style="width:8.759px">¥</i><i class="w55" style="width:5.800px">r</i><i class="w20" style="width:7.094px">?</i><i class="w66" style="width:8.759px">¥</i><i class="w51" style="width:8.613px">n</i><i class="w6" style="width:6.145px">)</i><i class="w64" style="width:6.185px">|</i><i class="w2" style="width:8.647px">$</i><i class="w6" style="width:6.145px">)</i><i class="w6" style="width:6.145px">)</i><i class="w11 sl" style="width:7.074px">/</i><i class="w44" style="width:8.434px">g</i><i class="w17" style="width:5.899px">;</i></span></div>
<div class="l" id="L21" style="top:412px;left:95px"><span class="k"><i class="w59" style="width:7.890px">v</i><i class="w38" style="width:8.183px">a</i><i class="w55" style="width:5.820px">r</i></span><i class="w0" style="width:4.794px"> </i><i class="w55" style="width:5.820px">r</i><i class="w42" style="width:8.117px">e</i><i class="w56" style="width:7.105px">s</i><i class="w58" style="width:8.643px">u</i><i class="w49" style="width:3.735px">l</i><i class="w57" style="width:5.367px">t</i><i class="w0" style="width:4.794px"> </i><i class="w18" style="width:11.166px">=</i><i class="w0" style="width:4.794px"> </i><i class="w40" style="width:7.105px">c</i><i class="w52" style="width:8.197px">o</i><i class="w51" style="width:8.643px">n</i><i class="w57" style="width:5.367px">t</i><i class="w42" style="width:8.117px">e</i><i class="w51" style="width:8.643px">n</i><i class="w57" style="width:5.367px">t</i><i class="w10" style="width:4.741px">.</i><i class="w55" style="width:5.820px">r</i><i class="w42" style="width:8.117px">e</i><i class="w53" style="width:8.463px">p</i><i class="w49" style="width:3.735px">l</i><i class="w38" style="width:8.183px">a</i><i class="w40" style="width:7.105px">c</i><i class="w42" style="width:8.117px">e</i><i class="w5" style="width:6.033px">(</i><i class="w55" style="width:5.820px">r</i><i class="w42" style="width:8.117px">e</i><i class="w44" style="width:8.463px">g</i><i class="w42" style="width:8.117px">e</i><i class="w61" style="width:7.890px">x</i><i class="w53" style="width:8.463px">p</i><i class="w8" style="width:4.961px">,</i><i class="w0" style="width:4.794px"> </i><span class="k"><i class="w43" style="width:4.794px">f</i><i class="w58" style="width:8.643px">u</i><i class="w51" style="width:8.643px">n</i><i class="w40" style="width:7.105px">c</i><i class="w57" style="width:5.367px">t</i><i class="w46" style="width:3.735px">i</i><i class="w52" style="width:8.197px">o</i><i class="w51" style="width:8.643px">n</i></span><i class="w0" style="width:4.794px"> </i><i class="w5" style="width:6.033px">(</i><i class="w50" style="width:13.237px">m</i><i class="w38" style="width:8.183px">a</i><i class="w57" style="width:5.367px">t</i><i class="w40" style="width:7.105px">c</i><i class="w45" style="width:8.643px">h</i><i class="w8" style="width:4.961px">,</i><i class="w0" style="width:4.794px"> </i><i class="w50" style="width:13.237px">m</i><i class="w12" style="width:8.676px">1</i><i class="w8" style="width:4.961px">,</i><i class="w0" style="width:4.794px"> </i><i class="w50" style="width:13.237px">m</i><i class="w13" style="width:8.676px">2</i><i class="w8" style="width:4.961px">,</i><i class="w0" style="width:4.794px"> </i><i class="w50" style="width:13.237px">m</i><i class="w14" style="width:8.676px">3</i><i class="w8" style="width:4.961px">,</i><i class="w0" style="width:4.794px"> </i><i class="w50" style="width:13.237px">m</i><i class="w15" style="width:8.676px">4</i><i class="w6" style="width:6.166px">)</i><i class="w0" style="width:4.794px"> </i><i class="w63 b" style="width:8.656px">{</i></div>
<div class="l" id="L22" style="top:431px;left:114px"><span class="c"><i class="w11 sl" style="width:7.094px">/</i><i class="w11 sl" style="width:7.094px">/</i><i class="w0" style="width:4.792px"> </i><i class="w28" style="width:10.748px">O</i><i class="w51" style="width:8.638px">n</i><i class="w49" style="width:3.733px">l</i><i class="w62" style="width:7.886px">y</i><i class="w0" style="width:4.792px"> </i><i class="w52" style="width:8.192px">o</i><i class="w51" style="width:8.638px">n</i><i class="w42" style="width:8.112px">e</i><i class="w0" style="width:4.792px"> </i><i class="w52" style="width:8.192px">o</i><i class="w43" style="width:4.792px">f</i><i class="w0" style="width:4.792px"> </i><i class="w50" style="width:13.230px">m</i><i class="w12" style="width:8.671px">1</i><i class="w8" style="width:4.958px">,</i><i class="w0" style="width:4.792px"> </i><i class="w50" style="width:13.230px">m</i><i class="w13" style="width:8.671px">2</i><i class="w8" style="width:4.958px">,</i><i class="w0" style="width:4.792px"> </i><i class="w50" style="width:13.230px">m</i><i class="w14" style="width:8.671px">3</i><i class="w8" style="width:4.958px">,</i><i class="w0" style="width:4.792px"> </i><i class="w50" style="width:13.230px">m</i><i class="w15" style="width:8.671px">4</i><i class="w0" style="width:4.792px"> </i><i class="w50" style="width:13.230px">m</i><i class="w38" style="width:8.179px">a</i><i class="w57" style="width:5.364px">t</i><i class="w40" style="width:7.101px">c</i><i class="w45" style="width:8.638px">h</i><i class="w42" style="width:8.112px">e</i><i class="w56" style="width:7.101px">s</i></span></div>
<div class="l" id="L23" style="top:450px;left:114px"><span class="k"><i class="w46" style="width:3.797px">i</i><i class="w43" style="width:4.874px">f</i></span><i class="w0" style="width:4.874px"> </i><i class="w5" style="width:6.133px">(</i><i class="w50" style="width:13.457px">m</i><i class="w14" style="width:8.820px">3</i><i class="w6" style="width:6.268px">)</i><i class="w0" style="width:4.874px"> </i><i class="w63 b" style="width:8.800px">{</i></div>
<div class="l" id="L24" style="top:469px;left:133px"><span class="c"><i class="w11 sl">/</i><i class="w11 sl">/</i><i class="w0"> </i><i class="w21">A</i><i class="w0"> </i><i class="w39">b</i><i class="w49">l</i><i class="w52">o</i><i class="w40">c</i><i class="w48">k</i><i class="w0"> </i><i class="w40">c</i><i class="w52">o</i><i class="w50">m</i><i class="w50">m</i><i class="w42">e</i><i class="w51">n</i><i class="w57">t</i><i class="w10">.</i><i class="w0"> </i><i class="w30">R</i><i class="w42">e</i><i class="w53">p</i><i class="w49">l</i><i class="w38">a</i><i class="w40">c</i><i class="w42">e</i><i class="w0"> </i><i class="w60">w</i><i class="w46">i</i><i class="w57">t</i><i class="w45">h</i><i class="w0"> </i><i class="w51">n</i><i class="w52">o</i><i class="w57">t</i><i class="w45">h</i><i class="w46">i</i><i class="w51">n</i><i class="w44">g</i></span></div>
<div class="l" id="L25" style="top:488px;left:133px"><span class="k"><i class="w55" style="width:5.987px">r</i><i class="w42" style="width:8.350px">e</i><i class="w57" style="width:5.521px">t</i><i class="w58" style="width:8.891px">u</i><i class="w55" style="width:5.987px">r</i><i class="w51" style="width:8.891px">n</i></span><i class="w0" style="width:4.932px"> </i><span class="s"><i class="w4" style="width:3.644px">&#x27;</i><i class="w4" style="width:3.644px">&#x27;</i></span><i class="w17" style="width:6.089px">;</i></div>
<div class="l" id="L26" style="top:507px;left:114px"><i class="w65 b">}</i></div>
<div class="l" id="L27" style="top:526px;left:114px"><span class="k"><i class="w42" style="width:8.193px">e</i><i class="w49" style="width:3.771px">l</i><i class="w56" style="width:7.171px">s</i><i class="w42" style="width:8.193px">e</i></span><i class="w0" style="width:4.839px"> </i><span class="k"><i class="w46" style="width:3.771px">i</i><i class="w43" style="width:4.839px">f</i></span><i class="w0" style="width:4.839px"> </i><i class="w5" style="width:6.089px">(</i><i class="w50" style="width:13.362px">m</i><i class="w15" style="width:8.758px">4</i><i class="w6" style="width:6.224px">)</i><i class="w0" style="width:4.839px"> </i><i class="w63 b" style="width:8.738px">{</i></div>
<div class="l" id="L28" style="top:545px;left:133px"><span class="c"><i class="w11 sl" style="width:7.079px">/</i><i class="w11 sl" style="width:7.079px">/</i><i class="w0" style="width:4.782px"> </i><i class="w21" style="width:9.304px">A</i><i class="w0" style="width:4.782px"> </i><i class="w49" style="width:3.726px">l</i><i class="w46" style="width:3.726px">i</i><i class="w51" style="width:8.620px">n</i><i class="w42" style="width:8.096px">e</i><i class="w0" style="width:4.782px"> </i><i class="w40" style="width:7.086px">c</i><i class="w52" style="width:8.175px">o</i><i class="w50" style="width:13.203px">m</i><i class="w50" style="width:13.203px">m</i><i class="w42" style="width:8.096px">e</i><i class="w51" style="width:8.620px">n</i><i class="w57" style="width:5.353px">t</i><i class="w10" style="width:4.728px">.</i><i class="w0" style="width:4.782px"> </i><i class="w24" style="width:5.725px">I</i><i class="w43" style="width:4.782px">f</i><i class="w0" style="width:4.782px"> </i><i class="w46" style="width:3.726px">i</i><i class="w57" style="width:5.353px">t</i><i class="w0" style="width:4.782px"> </i><i class="w42" style="width:8.096px">e</i><i class="w51" style="width:8.620px">n</i><i class="w41" style="width:8.441px">d</i><i class="w56" style="width:7.086px">s</i><i class="w0" style="width:4.782px"> </i><i class="w46" style="width:3.726px">i</i><i class="w51" style="width:8.620px">n</i><i class="w0" style="width:4.782px"> </i><i class="w66" style="width:8.766px">¥</i><i class="w55" style="width:5.804px">r</i><i class="w20" style="width:7.099px">?</i><i class="w66" style="width:8.766px">¥</i><i class="w51" style="width:8.620px">n</i><i class="w0" style="width:4.782px"> </i><i class="w57" style="width:5.353px">t</i><i class="w45" style="width:8.620px">h</i><i class="w42" style="width:8.096px">e</i><i class="w51" style="width:8.620px">n</i><i class="w0" style="width:4.782px"> </i><i class="w48" style="width:7.870px">k</i><i class="w42" style="width:8.096px">e</i><i class="w42" style="width:8.096px">e</i><i class="w53" style="width:8.441px">p</i><i class="w0" style="width:4.782px"> </i><i class="w46" style="width:3.726px">i</i><i class="w57" style="width:5.353px">t</i><i class="w10" style="width:4.728px">.</i></span></div>
<div class="l" id="L29" style="top:564px;left:133px"><span class="k"><i class="w59" style="width:7.944px">v</i><i class="w38" style="width:8.239px">a</i><i class="w55" style="width:5.859px">r</i></span><i class="w0" style="width:4.827px"> </i><i class="w49" style="width:3.761px">l</i><i class="w42" style="width:8.172px">e</i><i class="w51" style="width:8.702px">n</i><i class="w44" style="width:8.521px">g</i><i class="w57" style="width:5.403px">t</i><i class="w45" style="width:8.702px">h</i><i class="w37" style="width:8.735px">_</i><i class="w12" style="width:8.735px">1</i><i class="w0" style="width:4.827px"> </i><i class="w18" style="width:11.242px">=</i><i class="w0" style="width:4.827px"> </i><i class="w50" style="width:13.327px">m</i><i class="w15" style="width:8.735px">4</i><i class="w10" style="width:4.773px">.</i><i class="w49" style="width:3.761px">l</i><i class="w42" style="width:8.172px">e</i><i class="w51" style="width:8.702px">n</i><i class="w44" style="width:8.521px">g</i><i class="w57" style="width:5.403px">t</i><i class="w45" style="width:8.702px">h</i><i class="w17" style="width:5.960px">;</i></div>
<div class="l" id="L30" style="top:583px;left:133px"><span class="k"><i class="w46">i</i><i class="w43">f</i></span><i class="w0"> </i><i class="w5">(</i><i class="w49">l</i><i class="w42">e</i><i class="w51">n</i><i class="w44">g</i><i class="w57">t</i><i class="w45">h</i><i class="w37">_</i><i class="w12">1</i><i class="w0"> </i><i class="w19">&gt;</i><i class="w0"> </i><i class="w13">2</i><i class="w0"> </i><i class="w3">&amp;</i><i class="w3">&amp;</i><i class="w0"> </i><i class="w50">m</i><i class="w15">4</i><i class="w34">[</i><i class="w49">l</i><i class="w42">e</i><i class="w51">n</i><i class="w44">g</i><i class="w57">t</i><i class="w45">h</i><i class="w37">_</i><i class="w12">1</i><i class="w0"> </i><i class="w9">-</i><i class="w0"> </i><i class="w12">1</i><i class="w35">]</i><i class="w0"> </i><i class="w18">=</i><i class="w18">=</i><i class="w18">=</i><i class="w0"> </i><span class="s"><i class="w4">&#x27;</i><i class="w66">¥</i><i class="w51">n</i><i class="w4">&#x27;</i></span><i class="w6">)</i><i class="w0"> </i><i class="w63 b">{</i></div>
<div class="l" id="L31" style="top:602px;left:152px"><span class="k"><i class="w55" style="width:5.843px">r</i><i class="w42" style="width:8.149px">e</i><i class="w57" style="width:5.388px">t</i><i class="w58" style="width:8.677px">u</i><i class="w55" style="width:5.843px">r</i><i class="w51" style="width:8.677px">n</i></span><i class="w0" style="width:4.813px"> </i><i class="w50" style="width:13.290px">m</i><i class="w15" style="width:8.711px">4</i><i class="w34" style="width:6.231px">[</i><i class="w49" style="width:3.750px">l</i><i class="w42" style="width:8.149px">e</i><i class="w51" style="width:8.677px">n</i><i class="w44" style="width:8.497px">g</i><i class="w57" style="width:5.388px">t</i><i class="w45" style="width:8.677px">h</i><i class="w37" style="width:8.711px">_</i><i class="w12" style="width:8.711px">1</i><i class="w0" style="width:4.813px"> </i><i class="w9" style="width:6.197px">-</i><i class="w0" style="width:4.813px"> </i><i class="w13" style="width:8.711px">2</i><i class="w35" style="width:6.231px">]</i><i class="w0" style="width:4.813px"> </i><i class="w18" style="width:11.211px">=</i><i class="w18" style="width:11.211px">=</i><i class="w18" style="width:11.211px">=</i><i class="w0" style="width:4.813px"> </i><span class="s"><i class="w4" style="width:3.557px">&#x27;</i><i class="w66" style="width:8.825px">¥</i><i class="w55" style="width:5.843px">r</i><i class="w4" style="width:3.557px">&#x27;</i></span><i class="w0" style="width:4.813px"> </i><i class="w20" style="width:7.147px">?</i><i class="w0" style="width:4.813px"> </i><span class="s"><i class="w4" style="width:3.557px">&#x27;</i><i class="w66" style="width:8.825px">¥</i><i class="w55" style="width:5.843px">r</i><i class="w66" style="width:8.825px">¥</i><i class="w51" style="width:8.677px">n</i><i class="w4" style="width:3.557px">&#x27;</i></span><i class="w0" style="width:4.813px"> </i><i class="w16" style="width:6.164px">:</i><i class="w0" style="width:4.813px"> </i><span class="s"><i class="w4" style="width:3.557px">&#x27;</i><i class="w66" style="width:8.825px">¥</i><i class="w51" style="width:8.677px">n</i><i class="w4" style="width:3.557px">&#x27;</i></span><i class="w17" style="width:5.943px">;</i></div>
<div class="l" id="L32" style="top:621px;left:133px"><i class="w65 b">}</i></div>
<div class="l" id="L33" style="top:640px;left:133px"><span class="k"><i class="w42" style="width:8.022px">e</i><i class="w49" style="width:3.692px">l</i><i class="w56" style="width:7.022px">s</i><i class="w42" style="width:8.022px">e</i></span><i class="w0" style="width:4.738px"> </i><i class="w63 b" style="width:8.555px">{</i></div>
<div class="l" id="L34" style="top:659px;left:152px"><span class="k"><i class="w55" style="width:6.052px">r</i><i class="w42" style="width:8.441px">e</i><i class="w57" style="width:5.581px">t</i><i class="w58" style="width:8.988px">u</i><i class="w55" style="width:6.052px">r</i><i class="w51" style="width:8.988px">n</i></span><i class="w0" style="width:4.986px"> </i><span class="s"><i class="w4" style="width:3.684px">&#x27;</i><i class="w4" style="width:3.684px">&#x27;</i></span><i class="w17" style="width:6.156px">;</i></div>
<div class="l" id="L35" style="top:678px;left:133px"><i class="w65 b">}</i></div>
<div class="l" id="L36" style="top:697px;left:114px"><i class="w65 b">}</i></div>
<div class="l" id="L37" style="top:716px;left:114px"><span class="k"><i class="w42" style="width:8.022px">e</i><i class="w49" style="width:3.692px">l</i><i class="w56" style="width:7.022px">s</i><i class="w42" style="width:8.022px">e</i></span><i class="w0" style="width:4.738px"> </i><i class="w63 b" style="width:8.555px">{</i></div>
<div class="l" id="L38" style="top:735px;left:133px"><span class="c"><i class="w11 sl" style="width:7.075px">/</i><i class="w11 sl" style="width:7.075px">/</i><i class="w0" style="width:4.778px"> </i><i class="w33" style="width:13.426px">W</i><i class="w42" style="width:8.090px">e</i><i class="w0" style="width:4.778px"> </i><i class="w50" style="width:13.193px">m</i><i class="w38" style="width:8.156px">a</i><i class="w57" style="width:5.349px">t</i><i class="w40" style="width:7.081px">c</i><i class="w45" style="width:8.614px">h</i><i class="w0" style="width:4.778px"> </i><i class="w38" style="width:8.156px">a</i><i class="w0" style="width:4.778px"> </i><i class="w56" style="width:7.081px">s</i><i class="w57" style="width:5.349px">t</i><i class="w55" style="width:5.800px">r</i><i class="w46" style="width:3.723px">i</i><i class="w51" style="width:8.614px">n</i><i class="w44" style="width:8.435px">g</i></span></div>
<div class="l" id="L39" style="top:754px;left:133px"><span class="k"><i class="w55" style="width:5.958px">r</i><i class="w42" style="width:8.310px">e</i><i class="w57" style="width:5.494px">t</i><i class="w58" style="width:8.848px">u</i><i class="w55" style="width:5.958px">r</i><i class="w51" style="width:8.848px">n</i></span><i class="w0" style="width:4.908px"> </i><i class="w50" style="width:13.552px">m</i><i class="w38" style="width:8.378px">a</i><i class="w57" style="width:5.494px">t</i><i class="w40" style="width:7.274px">c</i><i class="w45" style="width:8.848px">h</i><i class="w17" style="width:6.060px">;</i></div>
<div class="l" id="L40" style="top:773px;left:114px"><i class="w65 b">}</i></div>
<div class="l" id="L41" style="top:792px;left:95px"><i class="w65 b">}</i><i class="w6">)</i><i class="w17">;</i></div>
<div class="l" id="L42" style="top:811px;left:95px"><span class="k"><i class="w55" style="width:5.886px">r</i><i class="w42" style="width:8.210px">e</i><i class="w57" style="width:5.428px">t</i><i class="w58" style="width:8.742px">u</i><i class="w55" style="width:5.886px">r</i><i class="w51" style="width:8.742px">n</i></span><i class="w0" style="width:4.849px"> </i><i class="w55" style="width:5.886px">r</i><i class="w42" style="width:8.210px">e</i><i class="w56" style="width:7.186px">s</i><i class="w58" style="width:8.742px">u</i><i class="w49" style="width:3.778px">l</i><i class="w57" style="width:5.428px">t</i><i class="w17" style="width:5.987px">;</i></div>
<div class="l" id="L43" style="top:830px;left:76px"><i class="w65 b">}</i></div>
<div class="l" id="L45" style="top:868px;left:76px"><span class="k"><i class="w43" style="width:4.787px">f</i><i class="w58" style="width:8.630px">u</i><i class="w51" style="width:8.630px">n</i><i class="w40" style="width:7.094px">c</i><i class="w57" style="width:5.359px">t</i><i class="w46" style="width:3.730px">i</i><i class="w52" style="width:8.184px">o</i><i class="w51" style="width:8.630px">n</i></span><i class="w0" style="width:4.787px"> </i><i class="w44" style="width:8.450px">g</i><i class="w42" style="width:8.104px">e</i><i class="w57" style="width:5.359px">t</i><i class="w27" style="width:10.185px">N</i><i class="w25" style="width:7.586px">L</i><i class="w31" style="width:9.341px">S</i><i class="w22" style="width:9.507px">C</i><i class="w52" style="width:8.184px">o</i><i class="w51" style="width:8.630px">n</i><i class="w43" style="width:4.787px">f</i><i class="w46" style="width:3.730px">i</i><i class="w44" style="width:8.450px">g</i><i class="w58" style="width:8.630px">u</i><i class="w55" style="width:5.811px">r</i><i class="w38" style="width:8.171px">a</i><i class="w57" style="width:5.359px">t</i><i class="w46" style="width:3.730px">i</i><i class="w52" style="width:8.184px">o</i><i class="w51" style="width:8.630px">n</i><i class="w5" style="width:6.023px">(</i><i class="w6" style="width:6.156px">)</i><i class="w0" style="width:4.787px"> </i><i class="w63 b" style="width:8.643px">{</i></div>
<div class="l" id="L46" style="top:887px;left:95px"><span class="k"><i class="w59">v</i><i class="w38">a</i><i class="w55">r</i></span><i class="w0"> </i><i class="w49">l</i><i class="w52">o</i><i class="w40">c</i><i class="w38">a</i><i class="w49">l</i><i class="w42">e</i><i class="w0"> </i><i class="w18">=</i><i class="w0"> </i><i class="w38">a</i><i class="w55">r</i><i class="w44">g</i><i class="w56">s</i><i class="w34">[</i><span class="s"><i class="w4">&#x27;</i><i class="w49">l</i><i class="w52">o</i><i class="w40">c</i><i class="w38">a</i><i class="w49">l</i><i class="w42">e</i><i class="w4">&#x27;</i></span><i class="w35">]</i><i class="w17">;</i></div>
<div style="position:absolute;left:0;top:0;width:60px;height:900px;will-change:transform;">
<div class="ln" style="top:33px">1</div>
<div class="ln" style="top:52px">2</div>
<div class="ln" style="top:71px">3</div>
<div class="ln" style="top:90px">4</div>
<div class="ln" style="top:109px">5</div>
<div class="ln" style="top:128px">6</div>
<div class="ln" style="top:147px">7</div>
<div class="ln" style="top:166px">8</div>
<div class="ln" style="top:185px">9</div>
<div class="ln" style="top:204px">10</div>
<div class="ln" style="top:223px">11</div>
<div class="ln" style="top:242px">12</div>
<div class="ln" style="top:261px">13</div>
<div class="ln" style="top:280px">14</div>
<div class="ln" style="top:299px">15</div>
<div class="ln" style="top:318px">16</div>
<div class="ln" style="top:337px">17</div>
<div class="ln" style="top:356px">18</div>
<div class="ln" style="top:375px">19</div>
<div class="ln" style="top:394px">20</div>
<div class="ln" style="top:413px">21</div>
<div class="ln" style="top:432px">22</div>
<div class="ln" style="top:451px">23</div>
<div class="ln" style="top:470px">24</div>
<div class="ln" style="top:489px">25</div>
<div class="ln" style="top:508px">26</div>
<div class="ln" style="top:527px">27</div>
<div class="ln" style="top:546px">28</div>
<div class="ln" style="top:565px">29</div>
<div class="ln" style="top:584px">30</div>
<div class="ln" style="top:603px">31</div>
<div class="ln" style="top:622px">32</div>
<div class="ln" style="top:641px">33</div>
<div class="ln" style="top:660px">34</div>
<div class="ln" style="top:679px">35</div>
<div class="ln" style="top:698px">36</div>
<div class="ln" style="top:717px">37</div>
<div class="ln" style="top:736px">38</div>
<div class="ln" style="top:755px">39</div>
<div class="ln" style="top:774px">40</div>
<div class="ln" style="top:793px">41</div>
<div class="ln" style="top:812px">42</div>
<div class="ln" style="top:831px">43</div>
<div class="ln" style="top:850px">44</div>
<div class="ln" style="top:869px">45</div>
<div class="ln" style="top:888px">46</div>
</div>
</body></html>
